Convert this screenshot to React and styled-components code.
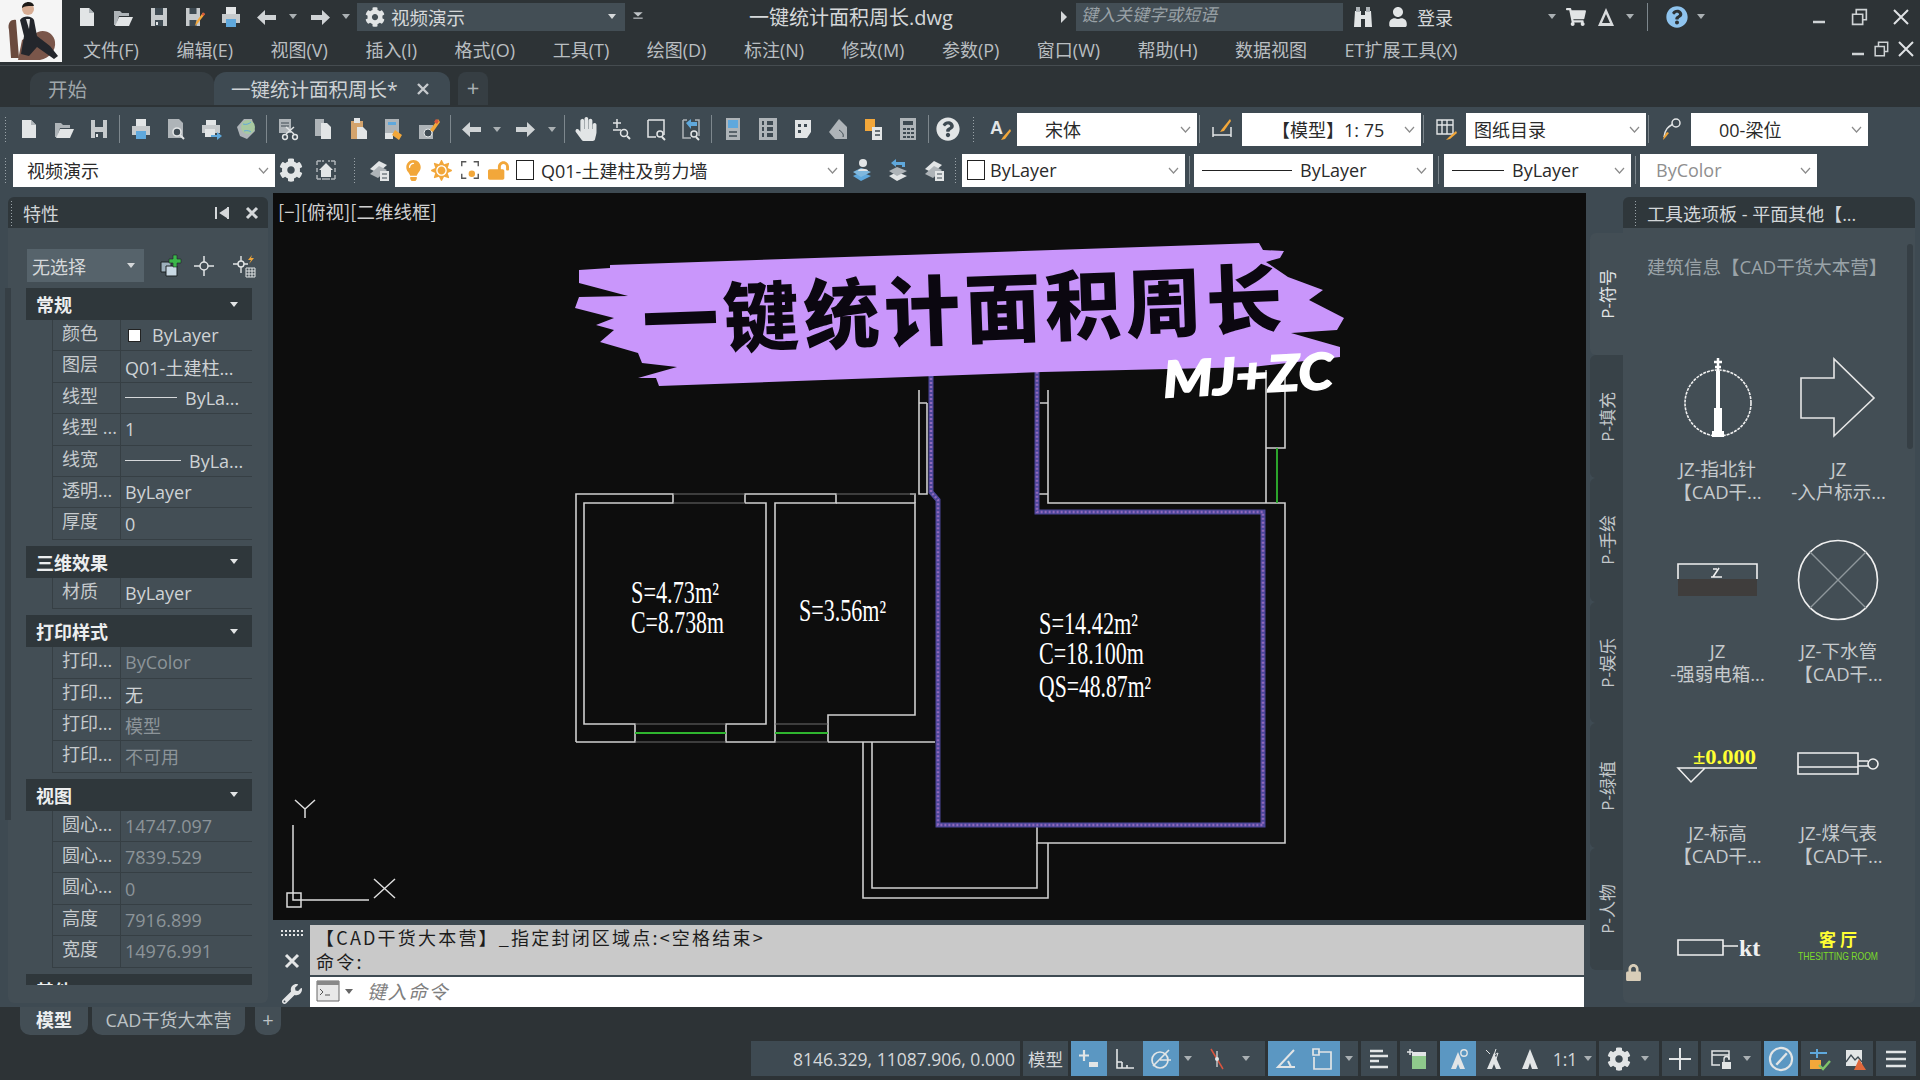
import styled, { createGlobalStyle } from "styled-components";
import { FaCog, FaHandPaper, FaQuestionCircle, FaShoppingCart, FaLock, FaWrench, FaLightbulb, FaSun, FaLockOpen, FaUser } from "react-icons/fa";

const L = "#e2e5e6";
const M = "#aeb4b8";
const B = "#5fa8dc";
const O = "#f2a73a";
const D = "#3e4a52";

const GlobalStyle = createGlobalStyle`
  html, body { margin: 0; padding: 0; background: #2d3336; }
  body { font-family: "Open Sans", "Noto Sans CJK SC", sans-serif; font-size: 18px; color: #ccd0d3; }
  * { box-sizing: border-box; }
`;

const Page = styled.div`
  width: 1920px;
  height: 1080px;
  overflow: hidden;
  display: flex;
  flex-direction: column;
  background: #2d3336;
`;

const Header = styled.div`
  height: 66px;
  display: flex;
  border-bottom: 1px solid #454c50;
`;

const Avatar = styled.svg`
  width: 62px;
  height: 62px;
  flex: none;
`;

const HeaderRows = styled.div`
  flex: 1;
  display: flex;
  flex-direction: column;
`;

const TitleRow = styled.div`
  height: 33px;
  display: flex;
  align-items: center;
  padding-left: 7px;
`;

const MenuRow = styled.div`
  height: 32px;
  display: flex;
  align-items: center;
  padding-left: 21px;
  gap: 37.5px;
  color: #b9bec1;
  font-size: 18px;
  white-space: nowrap;
`;

const Tool = styled.div`
  width: ${(p) => p.$w || 35}px;
  height: 32px;
  flex: none;
  display: flex;
  align-items: center;
  justify-content: center;
  margin-left: ${(p) => p.$ml || 0}px;
`;

const Drop = styled.span`
  flex: none;
  width: 0;
  height: 0;
  border-left: 4px solid transparent;
  border-right: 4px solid transparent;
  border-top: 5px solid ${(p) => p.$c || "#aab0b3"};
  margin: 0 ${(p) => p.$m ?? 5}px;
`;

const WorkspaceBox = styled.div`
  width: 268px;
  height: 28px;
  margin-left: 3px;
  background: #434e55;
  display: flex;
  align-items: center;
  padding: 0 4px 0 8px;
  gap: 6px;
  color: #d5d8da;
  font-size: 18.5px;
  & > span:nth-child(2) { flex: 1; }
`;

const DocTitle = styled.div`
  width: 311px;
  margin-left: 99px;
  font-size: 20px;
  color: #d5d8da;
  white-space: nowrap;
`;

const SearchBox = styled.div`
  width: 267px;
  height: 28px;
  margin-left: 8px;
  background: #434e55;
  color: #99a1a6;
  font-style: italic;
  font-size: 17px;
  line-height: 24px;
  padding: 0 5px;
`;

const LoginText = styled.span`
  width: 126px;
  margin-left: 4px;
  color: #d5d8da;
`;

const WinControls = styled.div`
  margin-left: auto;
  display: flex;
  align-items: center;
  gap: ${(p) => p.$gap}px;
  padding-right: ${(p) => p.$pr}px;
`;

const TabRow = styled.div`
  height: 41px;
  display: flex;
  align-items: flex-end;
  padding: 0 0 2px 30px;
`;

const DocTab = styled.div`
  width: ${(p) => p.$w}px;
  height: 33px;
  background: ${(p) => (p.$active ? D : "#363e43")};
  border-radius: 12px 12px 0 0;
  display: flex;
  align-items: center;
  justify-content: space-between;
  padding: 0 20px 0 ${(p) => (p.$active ? 17 : 18)}px;
  color: ${(p) => (p.$active ? "#cfd3d6" : "#9fa6aa")};
  font-size: 19.5px;
  white-space: nowrap;
`;

const PlusTab = styled.div`
  width: 30px;
  height: 33px;
  margin-left: 8px;
  background: #363e43;
  border-radius: 8px 8px 0 0;
  text-align: center;
  font-size: 22px;
  line-height: 31px;
  color: #aab0b3;
`;

const Toolbars = styled.div`
  height: 86px;
  background: ${D};
  display: flex;
  flex-direction: column;
`;

const ToolRow = styled.div`
  height: ${(p) => p.$h}px;
  display: flex;
  align-items: center;
  padding-left: ${(p) => p.$pl}px;
`;

const Grip = styled.span`
  flex: none;
  width: 4px;
  height: 26px;
  margin: 0 ${(p) => p.$mr ?? 4}px 0 ${(p) => p.$ml ?? 0}px;
  background-image: radial-gradient(#9aa3a8 1px, transparent 1px);
  background-size: 3px 3px;
`;

const CommandGrip = styled.span`
  flex: none;
  width: 24px;
  height: 9px;
  background-image: radial-gradient(#e3e5e6 1.2px, transparent 1.2px);
  background-size: 4px 4px;
`;

const Sep = styled.span`
  flex: none;
  width: 1px;
  height: 28px;
  background: #7d878d;
  margin: 0 ${(p) => p.$m ?? 1}px;
`;

const Combo = styled.div`
  flex: none;
  width: ${(p) => p.$w}px;
  height: 33px;
  background: #fff;
  color: ${(p) => p.$c || "#2a2a2a"};
  display: flex;
  align-items: center;
  gap: ${(p) => p.$gap ?? 5}px;
  padding: 0 6px 0 ${(p) => p.$pl ?? 8}px;
  margin-left: ${(p) => p.$ml || 0}px;
  font-size: 18px;
  white-space: nowrap;
  overflow: hidden;
`;

const ComboText = styled.span`
  flex: 1;
  overflow: hidden;
`;

const Chevron = styled.svg`
  width: 11px;
  height: 7px;
  flex: none;
  fill: none;
  stroke: #8b8b8b;
  stroke-width: 1.2;
`;

const LineSample = styled.span`
  flex: none;
  width: ${(p) => p.$w}px;
  height: 1px;
  margin-right: ${(p) => p.$mr || 0}px;
  background: ${(p) => p.$c || "#222"};
`;

const ColorBox = styled.span`
  flex: none;
  width: 18px;
  height: 20px;
  border: 1.5px solid #222;
  background: #fff;
`;

const Main = styled.div`
  height: 814px;
  display: flex;
  background: ${D};
`;

const LeftCol = styled.div`
  flex: none;
  width: 273px;
  padding: 4px 5px 0 8px;
  display: flex;
  flex-direction: column;
`;

const PanelHead = styled.div`
  height: 31px;
  flex: none;
  background: #2f373b;
  border-radius: 6px 6px 0 0;
  display: flex;
  align-items: center;
  padding: 0 7px 0 2px;
  color: #d2d6d8;
  white-space: nowrap;
`;

const PanelTitle = styled.span`
  flex: 1;
  margin-left: 5px;
`;

const PanelBody = styled.div`
  flex: none;
  height: 775px;
  background: #434e55;
  border-radius: 0 0 6px 6px;
  padding-top: 21px;
`;

const SelectRow = styled.div`
  display: flex;
  align-items: center;
  height: 33px;
  padding-left: 19px;
`;

const SelectBox = styled.div`
  width: 117px;
  height: 33px;
  background: #56636b;
  color: #d5d8da;
  display: flex;
  align-items: center;
  justify-content: space-between;
  padding: 0 4px 0 5px;
`;

const PropScroll = styled.div`
  display: flex;
  margin-top: 6px;
`;

const ScrollRail = styled.div`
  flex: none;
  width: 6px;
  height: 532px;
  margin: 0 15px 0 -3px;
  background: #363f45;
`;

const PropList = styled.div`
  width: 226px;
  height: 697px;
  overflow: hidden;
  display: flex;
  flex-direction: column;
  gap: 6px;
`;

const Section = styled.div`
  display: flex;
  flex-direction: column;
`;

const SectionHead = styled.div`
  height: 32px;
  flex: none;
  background: #2f373b;
  display: flex;
  align-items: center;
  justify-content: space-between;
  padding: 0 14px 0 10px;
  color: #eceeef;
  font-weight: 700;
`;

const PropRow = styled.div`
  height: 31.4px;
  flex: none;
  margin-left: 26px;
  display: grid;
  grid-template-columns: 68px 1fr;
  border-bottom: 1px solid #363f44;
  border-left: 1px solid #363f44;
`;

const PropLabel = styled.div`
  padding-left: 9px;
  color: #c6cacd;
  border-right: 1px solid #363f44;
  line-height: 26px;
  white-space: nowrap;
  overflow: hidden;
`;

const PropValue = styled.div`
  padding-left: 4px;
  color: ${(p) => (p.$dim ? "#8c9499" : "#cfd3d5")};
  display: flex;
  align-items: center;
  white-space: nowrap;
  overflow: hidden;
`;

const Swatch = styled.span`
  flex: none;
  width: 13px;
  height: 13px;
  margin: 0 11px 0 3px;
  background: #fff;
  border: 1px solid #222;
`;

const CenterCol = styled.div`
  flex: none;
  width: 1313px;
  display: flex;
  flex-direction: column;
`;

const Canvas = styled.div`
  height: 727px;
  background: #0d0d0d;
  position: relative;
  overflow: hidden;
`;

const Drawing = styled.svg`
  display: block;
`;

const CommandLine = styled.div`
  height: 82px;
  margin-top: 5px;
  display: flex;
`;

const CommandSide = styled.div`
  flex: none;
  width: 37px;
  display: flex;
  flex-direction: column;
  align-items: center;
  justify-content: space-between;
  padding: 4px 0 3px;
  color: #e3e5e6;
`;

const CommandMain = styled.div`
  flex: 1;
  margin-right: 2px;
  display: flex;
  flex-direction: column;
  gap: 2px;
`;

const CommandHistory = styled.div`
  height: 50px;
  background: #c9c9c9;
  color: #1c1c1c;
  padding: 0 6px;
  font-size: 18px;
  line-height: 24px;
  letter-spacing: 2.2px;
  font-family: "Noto Sans CJK SC", sans-serif;
`;

const CommandInput = styled.div`
  height: 30px;
  background: #fff;
  color: #7f7f7f;
  display: flex;
  align-items: center;
  padding: 0 0 2px 6px;
  font-style: italic;
  font-size: 19px;
  letter-spacing: 1.5px;
`;

const InputHint = styled.span`
  margin-left: 9px;
`;

const RightCol = styled.div`
  flex: none;
  width: 334px;
  display: flex;
  padding: 4px 5px 0 4px;
`;

const VTabs = styled.div`
  flex: none;
  width: 33px;
  padding-top: 36px;
  display: flex;
  flex-direction: column;
`;

const VTab = styled.div`
  height: ${(p) => p.$h}px;
  flex: none;
  background: ${(p) => (p.$active ? "#434e55" : "#384248")};
  border-radius: 6px 0 0 6px;
  display: flex;
  align-items: center;
  justify-content: center;
  color: ${(p) => (p.$active ? "#e2e5e6" : "#c2c7ca")};
  font-size: 17px;
  & > span {
    writing-mode: vertical-rl;
    text-orientation: sideways;
    transform: rotate(180deg);
    white-space: nowrap;
  }
`;

const Palette = styled.div`
  flex: 1;
  display: flex;
  flex-direction: column;
`;

const PaletteBody = styled.div`
  height: 775px;
  background: #434e55;
  border-radius: 0 0 6px 6px;
  display: flex;
  flex-direction: column;
  position: relative;
  padding: 27px 0 0 24px;
`;

const PaletteCaption = styled.div`
  color: #9aa3a8;
  font-size: 18.5px;
  white-space: nowrap;
  line-height: 24px;
`;

const PaletteRule = styled.div`
  width: 243px;
  height: 1px;
  margin-top: 37px;
  background: #586369;
`;

const PaletteGrid = styled.div`
  display: grid;
  grid-template-columns: 121px 121px;
  grid-auto-rows: 182px;
  margin: 37px 0 0 10px;
`;

const PaletteItem = styled.div`
  display: flex;
  flex-direction: column;
  align-items: center;
`;

const PaletteIcon = styled.svg`
  width: 110px;
  height: 106px;
  flex: none;
`;

const PaletteLabel = styled.div`
  margin-top: -2px;
  text-align: center;
  color: #c6cacd;
  font-size: 18.5px;
  line-height: 23px;
  white-space: pre;
`;

const PaletteBar = styled.div`
  position: absolute;
  right: 2px;
  top: 16px;
  width: 6px;
  height: 205px;
  border-radius: 3px;
  background: #363f45;
`;

const LockWrap = styled.div`
  position: absolute;
  left: 2px;
  bottom: 17px;
  color: #d8cdb8;
`;

const LayoutRow = styled.div`
  height: 28px;
  display: flex;
  padding-left: 20px;
  background: #2d3336;
`;

const LayoutTab = styled.div`
  width: ${(p) => p.$w}px;
  margin-right: ${(p) => p.$mr || 0}px;
  background: #434e55;
  border-radius: 0 0 10px 10px;
  text-align: center;
  line-height: 26px;
  font-weight: ${(p) => (p.$active ? 700 : 400)};
  color: ${(p) => (p.$active ? "#eceeef" : "#bcc2c5")};
  font-size: ${(p) => p.$fs || 18}px;
  white-space: nowrap;
`;

const StatusRow = styled.div`
  height: 45px;
  padding: 6px 0 4px 751px;
  display: flex;
  gap: 3px;
`;

const StatusGroup = styled.div`
  flex: none;
  width: ${(p) => p.$w}px;
  background: ${D};
  display: flex;
  align-items: center;
  justify-content: ${(p) => p.$end ? "flex-end" : "flex-start"};
  padding-right: ${(p) => p.$end ? 5 : 0}px;
  color: #d5d8da;
  font-size: 17.5px;
  white-space: nowrap;
`;

const StatusBtn = styled.div`
  flex: none;
  width: ${(p) => p.$w || 36}px;
  height: 100%;
  display: flex;
  align-items: center;
  justify-content: center;
  background: ${(p) => (p.$on ? "#5b97c2" : "transparent")};
`;

const glyphs = {
  new: <><path d="M5 3h9l5 5v13H5z" fill={L} /><path d="M14 3l5 5h-5z" fill={M} /></>,
  open: <><path d="M3 6h6l2 2h7v3H8l-3 9H3z" fill={M} /><path d="M8 12h14l-4 9H4z" fill={L} /></>,
  save: <><path d="M4 3h16v18H4z" fill="#c6cacc" /><path d="M8 3h8v7H8zM8 15h8v6H8z" fill={D} /><path d="M9 17h2v3H9z" fill={L} /></>,
  saveas: <><path d="M3 3h14v18H3z" fill="#c6cacc" /><path d="M6.5 3h7v6h-7zM6.5 15h7v6h-7z" fill={D} /><path d="M22 9l-7 9-3 3 1-4 7-9.5z" fill={O} /><path d="M20 7.5l2 1.5-1.5 2-2-1.5z" fill="#d8553c" /></>,
  print: <><path d="M7 2h10v7H7z" fill={L} /><path d="M3 9h18v9H3z" fill="#c6cacc" /><path d="M7 14h10v8H7z" fill={B} /></>,
  preview: <><path d="M4 2h11l4 4v15H4z" fill={M} /><circle cx="13" cy="15" r="4" fill={D} stroke={L} strokeWidth="1.6" /><path d="M16 18l4 4" stroke={L} strokeWidth="2" /></>,
  plot: <><path d="M7 3h10v5H7z" fill={L} /><path d="M3 8h18v8H3z" fill="#c6cacc" /><path d="M6 12h10v8H6z" fill={L} /><path d="M12 18h6v-3l5 4-5 4v-3h-6z" fill={B} /></>,
  globe: <><path d="M3 10l7-8h8l3 12-8 8-7-3z" fill={M} /><circle cx="14" cy="10" r="7" fill="#a8c9a0" /><path d="M9 7c3 1 6 0 8-2M10 14c3-1 6 0 7 1" stroke={B} fill="none" /></>,
  cut: <><path d="M3 2h12v14H3z" fill={M} /><path d="M5 6h8M5 9h8" stroke={D} /><path d="M10 10l8 7M18 10l-8 7" stroke={L} strokeWidth="1.5" /><circle cx="9" cy="20" r="2.4" fill="none" stroke={L} strokeWidth="1.5" /><circle cx="19" cy="20" r="2.4" fill="none" stroke={L} strokeWidth="1.5" /></>,
  copy: <><path d="M4 2h9v17H4z" fill={M} /><path d="M10 6h6l4 4v12H10z" fill={L} /></>,
  paste: <><path d="M5 4h12v18H5z" fill="#d3a36c" /><path d="M8 1h6v5H8z" fill={L} /><path d="M11 10h6l4 4v8H11z" fill={L} /></>,
  match: <><path d="M4 2h14v14H4z" fill={M} /><path d="M7 5h8v3H7z" fill={B} /><path d="M4 16h8v6H4z" fill={L} /><path d="M14 13l7 5-3 5-7-5z" fill={O} /></>,
  brush: <><path d="M3 8h14v14H3z" fill={M} /><circle cx="12" cy="16" r="4" fill={D} stroke={L} /><path d="M22 2l-8 11 3 2 7-10z" fill={O} /><path d="M20 2l3 2-2 3-3-2z" fill="#d8553c" /></>,
  undo: <path d="M10 5v5h11v5H10v5L2 12.5z" fill="#cfd3d5" />,
  redo: <path d="M14 5v5H3v5h11v5l8-7.500z" fill="#cfd3d5" />,
  zoomr: <><path d="M8 2v9M4 6h8M4 13h8" stroke={L} strokeWidth="1.5" /><circle cx="15" cy="16" r="3.5" fill="none" stroke={L} strokeWidth="1.5" /><path d="M18 19l3 3" stroke={L} strokeWidth="2" /></>,
  zoomw: <><path d="M4 3h16v15" fill="none" stroke={L} strokeWidth="1.5" /><path d="M4 3v17h8" fill="none" stroke={L} strokeWidth="1.5" /><circle cx="16" cy="17" r="3" fill="none" stroke={L} strokeWidth="1.5" /><path d="M18 20l3 3" stroke={L} strokeWidth="2" /></>,
  zoomp: <><path d="M4 3h4M16 3h4v16M4 3v18h8" fill="none" stroke={M} strokeWidth="1.5" /><path d="M7 6l5-4v3h6v4h-6v3z" fill={B} /><circle cx="15" cy="17" r="3" fill="none" stroke={L} strokeWidth="1.5" /><path d="M17 20l3 3" stroke={L} strokeWidth="2" /></>,
  props: <><path d="M5 1h14v22H5z" fill={M} /><path d="M7 3h10v8H7z" fill={B} /><path d="M8 15h8M8 19h8" stroke={D} strokeWidth="1.5" /></>,
  sheet: <><path d="M3 1h18v22H3z" fill={M} /><path d="M6 4h2v4H6zM6 10h2v4H6zM6 16h2v4H6zM11 4h6v4h-6zM11 10h6v4h-6zM11 16h6v4h-6z" fill={D} /></>,
  tools: <><path d="M4 3h16v12l-4 6H4z" fill={L} /><path d="M7 7h3v3H7zM13 7h3v3h-3zM7 13h3v3H7z" fill={D} /></>,
  roll: <><path d="M3 15L13 2l8 8v12H9z" fill={M} /><path d="M13 13c3 2 5 4 4 7" stroke={D} fill="none" /></>,
  layerset: <><path d="M4 2h10v12H4z" fill={O} /><path d="M11 10h10v13H11z" fill={L} /><path d="M14 14h5M14 18h5" stroke={D} strokeWidth="1.5" /></>,
  calc: <><path d="M4 1h16v22H4z" fill={M} /><path d="M7 4h10v4H7z" fill={D} /><path d="M7 11h3v2H7zM11 11h3v2h-3zM15 11h3v2h-3zM7 15h3v2H7zM11 15h3v2h-3zM15 15h3v2h-3zM7 19h3v2H7zM11 19h3v2h-3zM15 19h3v2h-3z" fill={D} /></>,
  textstyle: <><text x="2" y="17" fontSize="18" fill={L} fontFamily="Liberation Sans" fontWeight="700">A</text><path d="M22 12l-7 8-2 3 4-1 6-8z" fill={O} /></>,
  dimstyle: <><path d="M3 10v10M21 10v10M3 18h18" stroke={L} strokeWidth="1.5" fill="none" /><path d="M20 2l-8 10-2 3 4-1 7-10z" fill={O} /></>,
  tablestyle: <><path d="M3 3h16v14H3zM3 8h16M8 3v14M13 3v14" fill="none" stroke={L} strokeWidth="1.4" /><path d="M22 14l-7 6-3 3 4-1 7-6z" fill={O} /></>,
  mleader: <><path d="M5 20c1-8 4-10 9-13" fill="none" stroke={L} strokeWidth="1.5" /><circle cx="17" cy="6" r="4" fill="none" stroke={L} strokeWidth="1.5" /><path d="M10 16l-4 5-2 2 1-4 3-4z" fill={O} /></>,
  wsgear: <><path d="M3 3h4M3 3v4M21 3h-4M21 3v4M3 21h4M3 21v-4M21 21h-4M21 21v-4M8 3h2M14 3h2M8 21h8M3 10v4M21 10v4" stroke={M} fill="none" strokeWidth="1.5" /><path d="M12 5l7 7h-2v7H7v-7H5z" fill={L} /></>,
  layerbulb: <><path d="M3 18l8-4 10 4-10 5z" fill={B} /><path d="M3 14l8-4 10 4-10 5z" fill="#7fb8de" /><circle cx="13" cy="5" r="4" fill={L} /><path d="M8 13c0-3 10-3 10 0z" fill={L} /></>,
  layerback: <><path d="M3 18l8-4 10 4-10 5z" fill={L} /><path d="M3 13l8-4 10 4-10 5z" fill={M} /><path d="M5 5l5-4v3h9v5h-3V7h-6v2z" fill={B} /></>,
  layerstate: <><path d="M3 11l9-8 8 4-9 8z" fill={L} /><path d="M3 16l9-8 8 4-9 8z" fill={M} /><path d="M13 13h9v10h-9z" fill={L} /><path d="M15 16h5M15 20h5" stroke={D} /></>,
  freeze: <><path d="M3 8V3h5M16 3h5v5M3 16v5h5M21 16v5h-5" stroke="#555" fill="none" strokeWidth="1.5" /><circle cx="14" cy="16" r="3.5" fill={O} /></>,
  binoc: <><path d="M4 6h6v16H3zM14 6h6l1 16h-7z" fill={L} /><path d="M5 2h4v5H5zM15 2h4v5h-4z" fill={M} /><path d="M10 10h4v4h-4z" fill={L} /></>,
  triangle: <path d="M12 3L4 21h16zM12 9l4 9H8z" fill="#d8dbdd" fillRule="evenodd" />,
  menu2: <><path d="M4 4h16l-8 7z" fill="#c0c5c8" /><path d="M4 14h16" stroke="#c0c5c8" strokeWidth="2" /></>,
  select: <><path d="M3 8h10v10H3z" fill="#9db0bc" stroke="#1d2325" /><path d="M8 12h11v10H8z" fill="#c9d9e4" stroke="#1d2325" /><path d="M15 1h4v4h4v4h-4v4h-4V9h-4V5h4z" fill="#3bb54a" stroke="#1d2325" strokeWidth=".6" /></>,
  pick: <><circle cx="12" cy="12" r="4" fill="none" stroke={L} strokeWidth="1.5" /><path d="M12 2v6M12 16v6M2 12h6M16 12h6" stroke={L} strokeWidth="1.5" /></>,
  quick: <><circle cx="9" cy="10" r="3" fill="none" stroke={L} strokeWidth="1.4" /><path d="M9 2v5M9 13v6M1 10h5M12 10h4" stroke={L} strokeWidth="1.4" /><path d="M20 1l-4 5h3l-2 4 5-6h-3z" fill={O} /><path d="M14 14h9v9h-9zM14 17h9M14 20h9M17 14v9M20 14v9" fill="none" stroke={L} /></>,
  grid: <><path d="M7 3v11M2 8.5h10" stroke={L} strokeWidth="2.2" /><path d="M12 15h9v5h-9z" fill={L} /></>,
  ortho: <path d="M4 2v19h17M9 15v6M4 15h5M14 18v3" fill="none" stroke={L} strokeWidth="1.6" />,
  polar: <><circle cx="11" cy="13" r="8" fill="none" stroke={L} strokeWidth="1.7" /><path d="M4 19L20 3M11 13h11" fill="none" stroke={L} strokeWidth="1.7" /></>,
  snapline: <><path d="M6 2l12 20" stroke="#d9553f" strokeWidth="1.5" /><path d="M12 4v16" stroke={L} strokeWidth="1.2" /><circle cx="12" cy="12" r="2" fill={L} /></>,
  iso: <><path d="M20 3L4 20h17" fill="none" stroke={L} strokeWidth="2" /><path d="M14 14l3 6" stroke={L} strokeWidth="2" /></>,
  dyn: <><path d="M8 5h13v17H4V10" fill="none" stroke={L} strokeWidth="1.7" /><path d="M3 2h6v6H3z" fill="none" stroke={L} strokeWidth="1.7" /></>,
  lweight: <path d="M3 4h13M3 9h18M3 14h9M3 20h18" stroke={L} strokeWidth="2.4" />,
  transp: <><path d="M4 2v6M1 5h6" stroke={L} strokeWidth="1.4" /><path d="M6 5h14v17H6z" fill="#8fc98c" /><path d="M6 5h14v4H6z" fill={L} /></>,
  annot: <><path d="M12 5l7 17h-5l-2-5-2 5H5z" fill={L} /><circle cx="18" cy="6" r="3.2" fill="none" stroke={L} strokeWidth="1.4" /></>,
  annot2: <><path d="M12 6l7 16h-5l-2-5-2 5H5z" fill={L} /><path d="M4 3l4 4M14 2l-2 6 4-2-2 6" stroke={L} fill="none" /></>,
  annot3: <path d="M12 2l8 20h-6l-2-6-2 6H4z" fill={L} />,
  plus: <path d="M12 1v22M1 12h22" stroke={L} strokeWidth="2" />,
  lockui: <><path d="M3 4h17v4H3zM3 8v10h8M20 8v5" fill="none" stroke={L} strokeWidth="1.5" /><path d="M13 15h9v7h-9z" fill={L} /><path d="M15 15v-3a2.4 2.4 0 0 1 5 0" fill="none" stroke={L} strokeWidth="1.4" /></>,
  clean: <><circle cx="12" cy="12" r="9.5" fill="none" stroke={L} strokeWidth="1.8" /><path d="M8 17l9-10" stroke={L} strokeWidth="2" /></>,
  sysmon: <><path d="M10 2v9M3 6h17" stroke={B} strokeWidth="2" /><path d="M3 13h11v9H3z" fill={O} /><path d="M12 18l4 4 7-8" stroke="#7fc36a" strokeWidth="2.4" fill="none" /></>,
  hwaccel: <><path d="M3 3h16v16H3z" fill={L} /><path d="M3 15l5-7 4 5 3-3 4 5" stroke={D} fill="none" strokeWidth="1.3" /><path d="M16 12l7 11h-12z" fill="#e0683c" /></>,
  hamb: <path d="M2 5h20M2 12h20M2 19h20" stroke={L} strokeWidth="2.6" />,
  console: <><path d="M1 2h22v20H1z" fill="#e8e8e8" stroke="#666" /><path d="M1 2h22v4H1z" fill="#888" /><path d="M4 10l3 3-3 3M9 16h5" stroke="#555" fill="none" /></>,
  restore: <path d="M5 9h11v11H5zM9 9V4h11v11h-4" fill="none" stroke="#cfd3d5" strokeWidth="1.8" />,
};

const Glyph = ({ name, size = 24 }) => (
  <svg width={size} height={size} viewBox="0 0 24 24" style={{ flex: "none" }}>{glyphs[name]}</svg>
);

const ChevronIcon = () => (
  <Chevron viewBox="0 0 11 7"><path d="M1 1l4.5 5L10 1" /></Chevron>
);

const Tools = ({ names, w }) => names.map((n, i) => <Tool key={i} $w={w}><Glyph name={n} /></Tool>);

const AvatarImage = () => (
  <Avatar viewBox="0 0 62 62">
    <rect width="62" height="62" fill="#f5f5f5" />
    <path d="M9 30c-2-8 3-11 7-10l3 38H11z" fill="#6a4a3e" />
    <path d="M38 32c8-3 16 2 17 10s-5 16-15 18H18l4-20z" fill="#7a564a" />
    <path d="M20 20c4-5 12-4 14 0l3 16 13 10 8 10-4 3-17-12-8 9-8-2 3-18z" fill="#23262c" />
    <path d="M26 19l4 0-1 10z" fill="#e8e8e8" />
    <circle cx="28" cy="9" r="6" fill="#d7ad94" />
    <path d="M22 8c0-7 11-8 12-2l-3 0c-3 0-6 0-9 2z" fill="#1d1a18" />
  </Avatar>
);

const wallLines = [
  "M576 742V494H673V503H584V724H635V742H576",
  "M745 503V494H836V503H775V724M745 503H766V724H726V742H775V503",
  "M828 742V715H915V503H836",
  "M828 742H935",
  "M910 494H915V503M919 494V403M919 403H927M919 390V494H927V403",
  "M1037 825V843H1285V503H1048V390M1037 494H1048M1048 403H1040",
  "M1266 370V448H1285V370M1266 448V503",
  "M863 742V898H1048V843M872 742V888H1037V843",
];

const dimLines = ["M673 494H745M673 503H745", "M836 494H915", "M635 724H726M635 742H726", "M775 724H828M775 742H828"];

const brush = "610,265 1259,243 1263,250 1284,251 1280,258 1266,262 1288,277 1323,290 1309,300 1344,318 1337,330 1291,333 1340,347 1340,357 1252,367 1042,372 659,386 656,378 638,378 677,367 642,363 638,353 600,342 614,330 596,325 614,318 575,308 579,297 628,296 579,283 579,270 610,268";

const roomLabels = [
  ["S=4.73m²", 631, 603, 88],
  ["C=8.738m", 631, 633, 93],
  ["S=3.56m²", 799, 621, 87],
  ["S=14.42m²", 1039, 634, 99],
  ["C=18.100m", 1039, 664, 105],
  ["QS=48.87m²", 1039, 697, 112],
];

const PlanDrawing = () => (
  <Drawing width="1313" height="727" viewBox="273 193 1313 727">
    <text x="278" y="219" fontSize="18.5" fill="#cfcfcf" fontFamily="'Noto Sans CJK SC', sans-serif">[−][俯视][二维线框]</text>
    {wallLines.map((d, i) => <path key={i} d={d} fill="none" stroke="#cfcfcf" strokeWidth="1.6" />)}
    {dimLines.map((d, i) => <path key={i} d={d} fill="none" stroke="#6f6f6f" strokeWidth="1.2" />)}
    <path d="M635 733H726M775 733H828M1277 448V503" stroke="#2fb52f" strokeWidth="1.8" fill="none" />
    <path d="M931 370V492L938 500V825H1263V512H1037V370" fill="none" stroke="#4c4699" strokeWidth="5" />
    <path d="M931 370V492L938 500V825H1263V512H1037V370" fill="none" stroke="#8f68bb" strokeWidth="2.5" strokeDasharray="2 2" />
    {roomLabels.map(([t, x, y, w]) => (
      <text key={t} x={x} y={y} fontSize="31" fill="#fff" textLength={w} lengthAdjust="spacingAndGlyphs" fontFamily="'Liberation Serif', serif">{t}</text>
    ))}
    <path d="M293 825V900H369M287 893h14v14h-14zM295 800l10 9 10-9M305 809v9M374 879l21 19M395 879l-21 19" fill="none" stroke="#dcdcdc" strokeWidth="1.5" />
    <polygon points={brush} fill="#c996fb" />
    <text x="642" y="338" fontSize="76" fontWeight="900" fill="#0b0710" textLength="640" transform="rotate(-2 960 303)" fontFamily="'Noto Sans CJK SC', sans-serif">一键统计面积周长</text>
    <text x="1163" y="393" fontSize="50" fontWeight="900" fontStyle="italic" fill="#fff" stroke="#fff" strokeWidth="1.5" textLength="170" lengthAdjust="spacingAndGlyphs" transform="rotate(-3 1250 375)" fontFamily="'Lato', sans-serif">MJ+ZC</text>
  </Drawing>
);

const sections = [
  ["常规", [
    ["颜色", "ByLayer", { swatch: true }],
    ["图层", "Q01-土建柱..."],
    ["线型", "ByLa...", { line: 52 }],
    ["线型 ...", "1"],
    ["线宽", "ByLa...", { line: 56 }],
    ["透明...", "ByLayer"],
    ["厚度", "0"],
  ]],
  ["三维效果", [["材质", "ByLayer"]]],
  ["打印样式", [
    ["打印...", "ByColor", { dim: true }],
    ["打印...", "无"],
    ["打印...", "模型", { dim: true }],
    ["打印...", "不可用", { dim: true }],
  ]],
  ["视图", [
    ["圆心...", "14747.097", { dim: true }],
    ["圆心...", "7839.529", { dim: true }],
    ["圆心...", "0", { dim: true }],
    ["高度", "7916.899", { dim: true }],
    ["宽度", "14976.991", { dim: true }],
  ]],
  ["其他", []],
];

const PropertyPanel = () => (
  <LeftCol>
    <PanelHead>
      <Grip />
      <PanelTitle>特性</PanelTitle>
      <svg width="16" height="16" viewBox="0 0 16 16"><path d="M2 2v12M14 2v12M13 4L7 8l6 4z" stroke="#d5d8da" strokeWidth="2" fill="#d5d8da" /></svg>
      <svg width="18" height="18" viewBox="0 0 18 18" style={{ marginLeft: 13 }}><path d="M4 4l10 10M14 4L4 14" stroke="#d5d8da" strokeWidth="3" /></svg>
    </PanelHead>
    <PanelBody>
      <SelectRow>
        <SelectBox>无选择<Drop $c="#d5d8da" /></SelectBox>
        <Tool $w={36} $ml={8}><Glyph name="select" /></Tool>
        <Tool $w={32}><Glyph name="pick" /></Tool>
        <Tool $w={36} $ml={6}><Glyph name="quick" /></Tool>
      </SelectRow>
      <PropScroll>
        <ScrollRail />
        <PropList>
          {sections.map(([title, rows]) => (
            <Section key={title}>
              <SectionHead>{title}<Drop $c="#e3e5e6" $m={0} /></SectionHead>
              {rows.map(([label, value, opt = {}], i) => (
                <PropRow key={i}>
                  <PropLabel>{label}</PropLabel>
                  <PropValue $dim={opt.dim}>
                    {opt.swatch && <Swatch />}
                    {opt.line && <LineSample $w={opt.line} $c="#d5d8da" $mr={8} />}
                    {value}
                  </PropValue>
                </PropRow>
              ))}
            </Section>
          ))}
        </PropList>
      </PropScroll>
    </PanelBody>
  </LeftCol>
);

const paletteItems = [
  ["JZ-指北针\n【CAD干...", <>
    <circle cx="55" cy="50" r="33" fill="none" stroke="#f0f0f0" strokeWidth="1.6" strokeDasharray="3 1" />
    <path d="M53 18h4v37h2v23h2v6H49v-6h2V55h2z" fill="#fff" />
    <path d="M55 5v13M51 9h8M52 14h6" stroke="#fff" strokeWidth="2.5" />
  </>],
  ["JZ\n-入户标示...", <path d="M17 25H50V6L90 45 50 83V65H17z" fill="none" stroke="#e6e6e6" strokeWidth="1.6" />],
  ["JZ\n-强弱电箱...", <>
    <path d="M15 44V29H94V44" fill="none" stroke="#f0f0f0" strokeWidth="1.6" />
    <path d="M15 44h79v17H15z" fill="#3f3d3c" />
    <path d="M50 42l6-9M54 34h-4M48 42h11" stroke="#f0f0f0" strokeWidth="1.6" fill="none" />
  </>],
  ["JZ-下水管\n【CAD干...", <>
    <circle cx="54" cy="45" r="39.5" fill="none" stroke="#f0f0f0" strokeWidth="1.6" />
    <path d="M26 17l56 56M82 17L26 73" stroke="#8f979b" strokeWidth="1.4" />
  </>],
  ["JZ-标高\n【CAD干...", <>
    <text x="30" y="47" fontSize="22" fontWeight="700" fill="#ffff33" textLength="63" lengthAdjust="spacingAndGlyphs" fontFamily="'Liberation Serif', serif">±0.000</text>
    <path d="M15 51h79M15 51h27L28 65z" fill="none" stroke="#f0f0f0" strokeWidth="1.5" />
  </>],
  ["JZ-煤气表\n【CAD干...", <>
    <path d="M14 36h60v21H14zM14 50h60M74 44h10M74 49h10" fill="none" stroke="#f0f0f0" strokeWidth="1.6" />
    <circle cx="89" cy="47" r="5" fill="none" stroke="#f0f0f0" strokeWidth="1.6" />
  </>],
  [null, <>
    <path d="M15 41h45v15H15zM60 47h15" fill="none" stroke="#f0f0f0" strokeWidth="1.6" />
    <text x="76" y="57" fontSize="24" fontWeight="700" fill="#f0f0f0" fontFamily="'Liberation Serif', serif">kt</text>
  </>],
  [null, <>
    <text x="54" y="47" fontSize="17" fontWeight="700" fill="#ffff33" textAnchor="middle" fontFamily="'Noto Sans CJK SC', sans-serif">客 厅</text>
    <text x="14" y="61" fontSize="11" fill="#7ddc2a" textLength="80" lengthAdjust="spacingAndGlyphs" fontFamily="'Liberation Sans', sans-serif">THESITTING ROOM</text>
  </>],
];

const vTabs = [["P-符号", 122], ["P-填充", 123], ["P-手绘", 124], ["P-娱乐", 121], ["P-绿植", 125], ["P-人物", 122]];

const ToolPalette = () => (
  <RightCol>
    <VTabs>
      {vTabs.map(([t, h], i) => <VTab key={t} $h={h} $active={i === 0}><span>{t}</span></VTab>)}
    </VTabs>
    <Palette>
      <PanelHead>
        <Grip $ml={9} />
        <PanelTitle>工具选项板 - 平面其他【...</PanelTitle>
      </PanelHead>
      <PaletteBody>
        <PaletteCaption>建筑信息【CAD干货大本营】</PaletteCaption>
        <PaletteRule />
        <PaletteGrid>
          {paletteItems.map(([label, art], i) => (
            <PaletteItem key={i}>
              <PaletteIcon viewBox="0 0 110 106">{art}</PaletteIcon>
              {label && <PaletteLabel>{label}</PaletteLabel>}
            </PaletteItem>
          ))}
        </PaletteGrid>
        <PaletteBar />
        <LockWrap><FaLock size={17} /></LockWrap>
      </PaletteBody>
    </Palette>
  </RightCol>
);

const menus = ["文件(F)", "编辑(E)", "视图(V)", "插入(I)", "格式(O)", "工具(T)", "绘图(D)", "标注(N)", "修改(M)", "参数(P)", "窗口(W)", "帮助(H)", "数据视图", "ET扩展工具(X)"];

const StatusBar = () => (
  <StatusRow>
    <StatusGroup $w={269} $end>8146.329, 11087.906, 0.000</StatusGroup>
    <StatusGroup $w={45} $end>模型</StatusGroup>
    <StatusGroup $w={194}>
      <StatusBtn $on><Glyph name="grid" /></StatusBtn>
      <StatusBtn><Glyph name="ortho" /></StatusBtn>
      <StatusBtn $on><Glyph name="polar" /></StatusBtn>
      <Drop />
      <StatusBtn $w={40}><Glyph name="snapline" /></StatusBtn>
      <Drop />
    </StatusGroup>
    <StatusGroup $w={90}>
      <StatusBtn $on><Glyph name="iso" /></StatusBtn>
      <StatusBtn $on><Glyph name="dyn" /></StatusBtn>
      <Drop $m={5} />
    </StatusGroup>
    <StatusGroup $w={36}><StatusBtn><Glyph name="lweight" /></StatusBtn></StatusGroup>
    <StatusGroup $w={37}><StatusBtn><Glyph name="transp" /></StatusBtn></StatusGroup>
    <StatusGroup $w={156}>
      <StatusBtn $on><Glyph name="annot" /></StatusBtn>
      <StatusBtn><Glyph name="annot2" /></StatusBtn>
      <StatusBtn><Glyph name="annot3" /></StatusBtn>
      <StatusBtn $w={34}>1:1</StatusBtn>
      <Drop $m={2} />
    </StatusGroup>
    <StatusGroup $w={60}>
      <StatusBtn $w={40}><FaCog size={24} color={L} /></StatusBtn>
      <Drop $m={2} />
    </StatusGroup>
    <StatusGroup $w={36}><StatusBtn><Glyph name="plus" /></StatusBtn></StatusGroup>
    <StatusGroup $w={60}>
      <StatusBtn $w={40}><Glyph name="lockui" /></StatusBtn>
      <Drop $m={2} />
    </StatusGroup>
    <StatusGroup $w={34}><StatusBtn $w={34} $on><Glyph name="clean" size={28} /></StatusBtn></StatusGroup>
    <StatusGroup $w={72}>
      <StatusBtn><Glyph name="sysmon" /></StatusBtn>
      <StatusBtn><Glyph name="hwaccel" /></StatusBtn>
    </StatusGroup>
    <StatusGroup $w={40}><StatusBtn $w={40}><Glyph name="hamb" /></StatusBtn></StatusGroup>
  </StatusRow>
);

export default function App() {
  return (
    <Page>
      <GlobalStyle />
      <Header>
        <AvatarImage />
        <HeaderRows>
          <TitleRow>
            <Tools names={["new", "open", "save", "saveas", "print"]} w={36} />
            <Tool $w={36}><Glyph name="undo" /></Tool>
            <Drop $m={4} />
            <Tool $w={36} $ml={1}><Glyph name="redo" /></Tool>
            <Drop $m={4} />
            <WorkspaceBox>
              <FaCog size={20} color={L} />
              <span>视频演示</span>
              <Drop $c="#d5d8da" />
            </WorkspaceBox>
            <Tool $w={24} $ml={1}><Glyph name="menu2" size={14} /></Tool>
            <DocTitle>一键统计面积周长.dwg</DocTitle>
            <svg width="8" height="14" viewBox="0 0 8 14" style={{ flex: "none" }}><path d="M1 1l6 6-6 6z" fill="#d5d8da" /></svg>
            <SearchBox>键入关键字或短语</SearchBox>
            <Tool $w={24} $ml={8}><Glyph name="binoc" /></Tool>
            <Tool $w={30} $ml={8}><FaUser size={20} color={L} /></Tool>
            <LoginText>登录</LoginText>
            <Drop />
            <Tool $w={30}><FaShoppingCart size={20} color={L} /></Tool>
            <Tool $w={30}><Glyph name="triangle" /></Tool>
            <Drop />
            <Sep $m={8} />
            <Tool $w={30} $ml={6}><FaQuestionCircle size={22} color="#8fc4ee" /></Tool>
            <Drop />
            <WinControls $gap={22} $pr={10}>
              <svg width="14" height="14" viewBox="0 0 14 14"><path d="M1 12h12" stroke="#cfd3d5" strokeWidth="2.5" /></svg>
              <Glyph name="restore" size={22} />
              <svg width="18" height="18" viewBox="0 0 18 18"><path d="M2 2l14 14M16 2L2 16" stroke="#dfe2e4" strokeWidth="2" /></svg>
            </WinControls>
          </TitleRow>
          <MenuRow>
            {menus.map((m) => <span key={m}>{m}</span>)}
            <WinControls $gap={6} $pr={5}>
              <svg width="14" height="14" viewBox="0 0 14 14"><path d="M1 12h12" stroke="#cfd3d5" strokeWidth="2.5" /></svg>
              <Glyph name="restore" size={20} />
              <svg width="18" height="18" viewBox="0 0 18 18"><path d="M2 2l14 14M16 2L2 16" stroke="#dfe2e4" strokeWidth="2" /></svg>
            </WinControls>
          </MenuRow>
        </HeaderRows>
      </Header>

      <TabRow>
        <DocTab $w={184}>开始</DocTab>
        <DocTab $w={236} $active>
          一键统计面积周长*
          <svg width="14" height="14" viewBox="0 0 14 14" style={{ flex: "none" }}><path d="M2 2l10 10M12 2L2 12" stroke="#c6cacd" strokeWidth="2.4" /></svg>
        </DocTab>
        <PlusTab>+</PlusTab>
      </TabRow>

      <Toolbars>
        <ToolRow $h={44} $pl={4}>
          <Grip $mr={3} />
          <Tools names={["new", "open", "save"]} />
          <Sep $m={3} />
          <Tools names={["print", "preview", "plot", "globe"]} />
          <Sep $m={3} />
          <Tools names={["cut", "copy", "paste", "match", "brush"]} />
          <Sep $m={5} />
          <Tool $w={32}><Glyph name="undo" /></Tool>
          <Drop $m={5} />
          <Tool $w={37}><Glyph name="redo" /></Tool>
          <Drop $m={5} />
          <Sep $m={3} />
          <Tool><FaHandPaper size={24} color={L} /></Tool>
          <Tools names={["zoomr", "zoomw", "zoomp"]} />
          <Sep $m={3} />
          <Tools names={["props", "sheet", "tools", "roll", "layerset", "calc"]} />
          <Sep $m={3} />
          <Tool $w={32}><FaQuestionCircle size={24} color={L} /></Tool>
          <Grip $ml={8} $mr={7} />
          <Tool $w={34}><Glyph name="textstyle" /></Tool>
          <Combo $w={180} $pl={28}><ComboText>宋体</ComboText><ChevronIcon /></Combo>
          <Sep $m={2} />
          <Tool $w={40}><Glyph name="dimstyle" /></Tool>
          <Combo $w={179} $pl={30}><ComboText>【模型】1: 75</ComboText><ChevronIcon /></Combo>
          <Sep $m={2} />
          <Tool $w={40}><Glyph name="tablestyle" /></Tool>
          <Combo $w={180} $pl={8}><ComboText>图纸目录</ComboText><ChevronIcon /></Combo>
          <Sep $m={2} />
          <Tool $w={40}><Glyph name="mleader" /></Tool>
          <Combo $w={177} $pl={28}><ComboText>00-梁位</ComboText><ChevronIcon /></Combo>
        </ToolRow>
        <ToolRow $h={38} $pl={4}>
          <Grip $mr={5} />
          <Combo $w={262} $pl={14}><ComboText>视频演示</ComboText><ChevronIcon /></Combo>
          <Tool $w={32}><FaCog size={24} color={L} /></Tool>
          <Tool $w={38}><Glyph name="wsgear" /></Tool>
          <Grip $ml={8} $mr={6} />
          <Tool $w={32}><Glyph name="layerstate" /></Tool>
          <Combo $w={449} $pl={8} $gap={7}>
            <FaLightbulb size={21} color={O} />
            <FaSun size={21} color={O} />
            <Glyph name="freeze" size={22} />
            <FaLockOpen size={21} color={O} />
            <ColorBox />
            <ComboText>Q01-土建柱及剪力墙</ComboText>
            <ChevronIcon />
          </Combo>
          <Tools names={["layerbulb", "layerback", "layerstate"]} w={36} />
          <Grip $ml={2} $mr={1} />
          <Combo $w={223} $pl={5} $ml={3}><ColorBox /><ComboText>ByLayer</ComboText><ChevronIcon /></Combo>
          <Sep $m={4} />
          <Combo $w={239} $pl={8}><LineSample $w={90} $mr={3} /><ComboText>ByLayer</ComboText><ChevronIcon /></Combo>
          <Sep $m={5} />
          <Combo $w={187} $pl={8}><LineSample $w={52} $mr={3} /><ComboText>ByLayer</ComboText><ChevronIcon /></Combo>
          <Sep $m={4} />
          <Combo $w={177} $pl={16} $c="#8f8f8f"><ComboText>ByColor</ComboText><ChevronIcon /></Combo>
        </ToolRow>
      </Toolbars>

      <Main>
        <PropertyPanel />
        <CenterCol>
          <Canvas><PlanDrawing /></Canvas>
          <CommandLine>
            <CommandSide>
              <CommandGrip />
              <svg width="18" height="18" viewBox="0 0 18 18"><path d="M3 3l12 12M15 3L3 15" stroke="#e3e5e6" strokeWidth="3" /></svg>
              <FaWrench size={20} />
            </CommandSide>
            <CommandMain>
              <CommandHistory>
                <div>【CAD干货大本营】_指定封闭区域点:&lt;空格结束&gt;</div>
                <div>命令:</div>
              </CommandHistory>
              <CommandInput>
                <Glyph name="console" />
                <Drop $c="#666" $m={5} />
                <InputHint>键入命令</InputHint>
              </CommandInput>
            </CommandMain>
          </CommandLine>
        </CenterCol>
        <ToolPalette />
      </Main>

      <LayoutRow>
        <LayoutTab $w={68} $mr={4} $active>模型</LayoutTab>
        <LayoutTab $w={153} $mr={10}>CAD干货大本营</LayoutTab>
        <LayoutTab $w={26} $fs={20}>+</LayoutTab>
      </LayoutRow>
      <StatusBar />
    </Page>
  );
}
